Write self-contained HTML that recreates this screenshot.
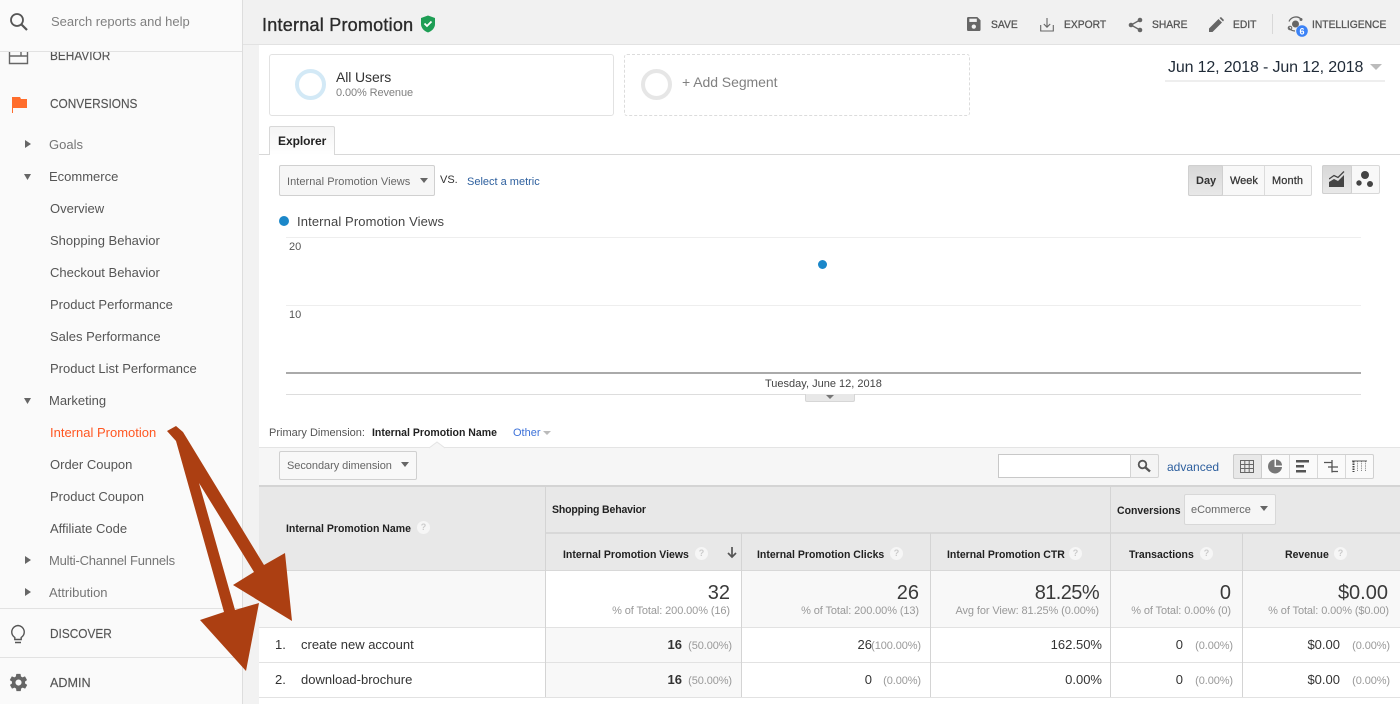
<!DOCTYPE html>
<html><head><meta charset="utf-8"><style>
html,body{margin:0;padding:0}
body{width:1400px;height:704px;overflow:hidden;position:relative;background:#fff;font-family:"Liberation Sans",sans-serif;color:#222}
.t{position:absolute;white-space:nowrap;line-height:16px}
.r{position:absolute;white-space:nowrap;line-height:16px;text-align:right}
.b{position:absolute;box-sizing:border-box}
.nav{font-size:13px;color:#555}
.up{transform:scaleX(.91);transform-origin:left center;-webkit-text-stroke:.15px #555}
.gr{color:#757575}
.h{font-size:11px;font-weight:bold;color:#222;transform:scaleX(.955);transform-origin:left center}
.tb{font-size:11px;color:#555;-webkit-text-stroke:.3px #555;transform:scaleX(.935);transform-origin:left center}
.q{position:absolute;width:13px;height:13px;border-radius:50%;background:#f6f6f6;color:#ccc;font-size:9px;line-height:13px;text-align:center;font-weight:bold}
.sub{font-size:11px;color:#999;letter-spacing:-.1px}
.big{font-size:20px;color:#3a3a3a;line-height:24px}
.cell{font-size:13px;color:#333}
svg{position:absolute}
</style></head><body>
<!-- sidebar -->
<div class="b" style="left:0;top:0;width:243px;height:704px;background:#fafafa;border-right:1px solid #ddd"></div>
<div class="b" style="left:243px;top:0;width:16px;height:704px;background:#f2f2f2"></div>
<div class="b" style="left:0;top:0;width:242px;height:52px;background:#fafafa;border-bottom:1px solid #e2e2e2;z-index:2"></div>
<svg style="left:8px;top:11px;z-index:3" width="22" height="22" viewBox="0 0 22 22"><circle cx="9" cy="9" r="6" fill="none" stroke="#555" stroke-width="1.800"/><path d="M13.500 13.500L19 19" stroke="#555" stroke-width="2.200"/></svg>
<div class="t" style="left:51px;top:14px;font-size:13px;color:#808080;z-index:3">Search reports and help</div>
<svg style="left:8px;top:50px" width="22" height="16"><path d="M1.500 2V13.500H19.500V2M1.500 6H19.500M13 2V6" fill="none" stroke="#666" stroke-width="1.400"/></svg>
<div class="t nav up" style="left:50px;top:48px">BEHAVIOR</div>
<svg style="left:10px;top:95px" width="18" height="19"><path d="M2 2H10L11 4H17V13H3V18H2Z" fill="#ff6d2c"/></svg>
<div class="t nav up" style="left:50px;top:96px">CONVERSIONS</div>
<svg style="left:24px;top:139px" width="10" height="10"><path d="M1 1L7 5L1 9Z" fill="#666"/></svg>
<div class="t nav gr" style="left:49px;top:137px">Goals</div>
<svg style="left:23px;top:172px" width="10" height="10"><path d="M1 2H8L4.500 8Z" fill="#666"/></svg>
<div class="t nav" style="left:49px;top:169px">Ecommerce</div>
<div class="t nav" style="left:50px;top:201px">Overview</div>
<div class="t nav" style="left:50px;top:233px">Shopping Behavior</div>
<div class="t nav" style="left:50px;top:265px">Checkout Behavior</div>
<div class="t nav" style="left:50px;top:297px">Product Performance</div>
<div class="t nav" style="left:50px;top:329px">Sales Performance</div>
<div class="t nav" style="left:50px;top:361px">Product List Performance</div>
<svg style="left:23px;top:396px" width="10" height="10"><path d="M1 2H8L4.500 8Z" fill="#666"/></svg>
<div class="t nav" style="left:49px;top:393px">Marketing</div>
<div class="t nav" style="left:50px;top:425px;color:#ff5722">Internal Promotion</div>
<div class="t nav" style="left:50px;top:457px">Order Coupon</div>
<div class="t nav" style="left:50px;top:489px">Product Coupon</div>
<div class="t nav" style="left:50px;top:521px">Affiliate Code</div>
<svg style="left:24px;top:555px" width="10" height="10"><path d="M1 1L7 5L1 9Z" fill="#666"/></svg>
<div class="t nav gr" style="left:49px;top:553px;letter-spacing:-.2px">Multi-Channel Funnels</div>
<svg style="left:24px;top:587px" width="10" height="10"><path d="M1 1L7 5L1 9Z" fill="#666"/></svg>
<div class="t nav gr" style="left:49px;top:585px">Attribution</div>
<div class="b" style="left:0;top:608px;width:242px;height:1px;background:#e2e2e2"></div>
<svg style="left:9px;top:623px" width="18" height="22"><path d="M9 2.500A6.500 6.500 0 0 0 5.800 14.500V16.500H12.200V14.500A6.500 6.500 0 0 0 9 2.500ZM6 19.500H12" fill="none" stroke="#555" stroke-width="1.400"/></svg>
<div class="t nav up" style="left:50px;top:626px">DISCOVER</div>
<div class="b" style="left:0;top:657px;width:242px;height:1px;background:#e2e2e2"></div>
<svg style="left:8px;top:672px" width="21" height="21" viewBox="0 0 24 24"><path fill="#666" d="M19.400 13c.04-.3.1-.7.1-1s-.03-.7-.1-1l2.100-1.600c.2-.15.25-.4.1-.6l-2-3.500c-.1-.2-.4-.3-.6-.2l-2.500 1c-.5-.4-1.100-.7-1.700-1l-.4-2.600c0-.2-.2-.4-.5-.4h-4c-.25 0-.45.2-.5.4l-.4 2.600c-.6.25-1.200.6-1.700 1l-2.500-1c-.2-.1-.5 0-.6.2l-2 3.500c-.1.2-.06.45.1.6L4.600 11c-.04.3-.1.7-.1 1s.03.7.1 1l-2.100 1.600c-.2.15-.25.4-.1.6l2 3.500c.1.2.4.3.6.2l2.500-1c.5.4 1.100.7 1.700 1l.4 2.600c.03.2.25.4.5.4h4c.25 0 .45-.2.5-.4l.4-2.600c.6-.25 1.200-.6 1.700-1l2.500 1c.2.1.5 0 .6-.2l2-3.500c.1-.2.06-.45-.1-.6zM12 15.500a3.500 3.500 0 1 1 0-7 3.500 3.500 0 0 1 0 7z"/></svg>
<div class="t nav" style="left:50px;top:675px;-webkit-text-stroke:.15px #555;transform:scaleX(.97);transform-origin:left center">ADMIN</div>

<!-- top bar -->
<div class="b" style="left:243px;top:0;width:1157px;height:45px;background:#f1f1f1;border-bottom:1px solid #e2e2e2"></div>
<div class="t" style="left:262px;top:15px;font-size:18px;line-height:20px;color:#2b2b2b;letter-spacing:.24px;-webkit-text-stroke:.35px #2b2b2b">Internal Promotion</div>
<svg style="left:420px;top:15px" width="16" height="18"><path d="M8 .5L15 3V9C15 13 12 16 8 17.500C4 16 1 13 1 9V3Z" fill="#1e9e55"/><path d="M4.500 8.500L7 11L11.500 6.500" fill="none" stroke="#fff" stroke-width="1.800"/></svg>
<svg style="left:967px;top:17px" width="14" height="14" viewBox="0 0 15 15"><path d="M1.500 0H11L14.500 3.500V13.500A1.500 1.500 0 0 1 13 15H1.500A1.500 1.500 0 0 1 0 13.500V1.500A1.500 1.500 0 0 1 1.500 0Z" fill="#666"/><rect x="2.500" y="1.800" width="8" height="3.500" fill="#f1f1f1"/><circle cx="7.300" cy="10.300" r="2.300" fill="#f1f1f1"/></svg>
<div class="t tb" style="left:991px;top:17px">SAVE</div>
<svg style="left:1040px;top:17px" width="14" height="15"><path d="M.7 8V14H13.300V8M7 1V10M3.800 7L7 10.200L10.200 7" fill="none" stroke="#666" stroke-width="1.100"/></svg>
<div class="t tb" style="left:1064px;top:17px">EXPORT</div>
<svg style="left:1128px;top:17px" width="15" height="16"><path d="M12 3L3 8L12 13" fill="none" stroke="#666" stroke-width="1.300"/><circle cx="12" cy="3" r="2.300" fill="#666"/><circle cx="3" cy="8" r="2.300" fill="#666"/><circle cx="12" cy="13" r="2.300" fill="#666"/></svg>
<div class="t tb" style="left:1152px;top:17px">SHARE</div>
<svg style="left:1209px;top:17px" width="15" height="15"><path d="M0 15V11.500L9.500 2L13 5.500L3.500 15ZM10.500 1L12 0L15 3L14 4.500Z" fill="#666"/></svg>
<div class="t tb" style="left:1233px;top:17px">EDIT</div>
<div class="b" style="left:1272px;top:14px;width:1px;height:20px;background:#d8d8d8"></div>
<svg style="left:1287px;top:16px" width="24" height="22"><circle cx="8.500" cy="8" r="3.500" fill="#666"/><path d="M2 5.500A7.500 7.500 0 0 1 14 3M1.500 11A7.500 7.500 0 0 0 8 15" fill="none" stroke="#666" stroke-width="1.300"/><circle cx="3" cy="12" r="1.800" fill="none" stroke="#666"/><circle cx="14" cy="3.500" r="1.500" fill="#666"/><circle cx="15" cy="15" r="5.800" fill="#3b82f6"/><text x="15" y="18.500" font-size="9" font-weight="bold" fill="#fff" text-anchor="middle" font-family="Liberation Sans">6</text></svg>
<div class="t tb" style="left:1312px;top:17px">INTELLIGENCE</div>

<!-- segments -->
<div class="b" style="left:269px;top:54px;width:345px;height:62px;border:1px solid #e2e2e2;border-radius:3px"></div>
<div class="b" style="left:295px;top:69px;width:31px;height:31px;border:4px solid #d3e9f6;border-radius:50%"></div>
<div class="t" style="left:336px;top:69px;font-size:14px;color:#333;letter-spacing:-.1px">All Users</div>
<div class="t" style="left:336px;top:85px;font-size:11px;color:#808080;letter-spacing:-.1px">0.00% Revenue</div>
<div class="b" style="left:624px;top:54px;width:346px;height:62px;border:1px dashed #dcdcdc;border-radius:3px"></div>
<div class="b" style="left:641px;top:69px;width:31px;height:31px;border:4px solid #e6e6e6;border-radius:50%"></div>
<div class="t" style="left:682px;top:74px;font-size:14px;color:#808080;letter-spacing:-.05px">+ Add Segment</div>
<div class="t" style="left:1168px;top:59px;font-size:16px;line-height:18px;color:#1f2a37;letter-spacing:-.15px">Jun 12, 2018 - Jun 12, 2018</div>
<svg style="left:1370px;top:64px" width="13" height="8"><path d="M0 0H12L6 6Z" fill="#bbb"/></svg>
<div class="b" style="left:1165px;top:80px;width:220px;height:2px;background:#eee"></div>

<!-- explorer -->
<div class="b" style="left:259px;top:154px;width:1141px;height:1px;background:#d8d8d8"></div>
<div class="b" style="left:269px;top:126px;width:66px;height:29px;border:1px solid #d8d8d8;border-bottom:0;background:linear-gradient(#f4f4f4,#fff);border-radius:2px 2px 0 0"></div>
<div class="t" style="left:278px;top:133px;font-size:12px;color:#222;font-weight:bold;letter-spacing:-.05px">Explorer</div>
<div class="b" style="left:279px;top:165px;width:156px;height:31px;border:1px solid #d0d0d0;border-radius:2px;background:#f6f6f6"></div>
<div class="t" style="left:287px;top:174px;font-size:11px;color:#666;letter-spacing:.05px">Internal Promotion Views</div>
<svg style="left:420px;top:178px" width="9" height="6"><path d="M0 0H8L4 5Z" fill="#666"/></svg>
<div class="t" style="left:440px;top:172px;font-size:11px;color:#333">VS.</div>
<div class="t" style="left:467px;top:174px;font-size:11px;color:#2d5f9e">Select a metric</div>

<div class="b" style="left:1188px;top:165px;width:124px;height:31px;border:1px solid #d8d8d8;border-radius:2px;background:#f8f8f8"></div>
<div class="b" style="left:1188px;top:165px;width:35px;height:31px;border:1px solid #d0d0d0;border-radius:2px;background:linear-gradient(#d8d8d8,#e8e8e8)"></div>
<div class="b" style="left:1264px;top:166px;width:1px;height:29px;background:#dcdcdc"></div>
<div class="t" style="left:1196px;top:173px;font-size:11px;color:#333;font-weight:bold">Day</div>
<div class="t" style="left:1230px;top:173px;font-size:11px;color:#333;-webkit-text-stroke:.25px #333">Week</div>
<div class="t" style="left:1272px;top:173px;font-size:11px;color:#333;letter-spacing:.1px;-webkit-text-stroke:.2px #333">Month</div>
<div class="b" style="left:1322px;top:165px;width:58px;height:29px;border:1px solid #d8d8d8;border-radius:2px;background:#f8f8f8"></div>
<div class="b" style="left:1322px;top:165px;width:30px;height:29px;border:1px solid #d0d0d0;border-radius:2px;background:linear-gradient(#d8d8d8,#e8e8e8)"></div>
<svg style="left:1329px;top:171px" width="16" height="17"><path d="M0 16V11L5 8L9 10L15 4V16Z" fill="#444"/><path d="M0 8L5 4.500L9 6.500L15 .5" fill="none" stroke="#444" stroke-width="1.300"/></svg>
<svg style="left:1356px;top:170px" width="18" height="18"><circle cx="9" cy="5" r="4" fill="#444"/><circle cx="3" cy="13" r="2.700" fill="#444"/><circle cx="14" cy="14" r="3" fill="#444"/></svg>

<!-- chart -->
<div class="b" style="left:279px;top:216px;width:10px;height:10px;border-radius:50%;background:#1b87c9"></div>
<div class="t" style="left:297px;top:214px;font-size:13px;color:#444;letter-spacing:.12px">Internal Promotion Views</div>
<div class="b" style="left:286px;top:237px;width:1075px;height:1px;background:#eee"></div>
<div class="t" style="left:289px;top:239px;font-size:11px;color:#555">20</div>
<div class="b" style="left:286px;top:305px;width:1075px;height:1px;background:#eee"></div>
<div class="t" style="left:289px;top:307px;font-size:11px;color:#555">10</div>
<div class="b" style="left:818px;top:260px;width:9px;height:9px;border-radius:50%;background:#1b87c9"></div>
<div class="b" style="left:286px;top:372px;width:1075px;height:2px;background:#aaa"></div>
<div class="t" style="left:765px;top:376px;font-size:11px;color:#444">Tuesday, June 12, 2018</div>
<div class="b" style="left:286px;top:394px;width:1075px;height:1px;background:#ddd"></div>
<div class="b" style="left:805px;top:394px;width:50px;height:8px;background:#e8e8e8;border:1px solid #d6d6d6;border-top:0;border-radius:0 0 2px 2px"></div>
<svg style="left:825px;top:395px" width="10" height="5"><path d="M1 0H9L5 4Z" fill="#777"/></svg>

<!-- primary dimension -->
<div class="t" style="left:269px;top:425px;font-size:11px;color:#555">Primary Dimension:</div>
<div class="t h" style="left:372px;top:425px">Internal Promotion Name</div>
<div class="t" style="left:513px;top:425px;font-size:11px;color:#3d72d9">Other</div>
<svg style="left:543px;top:431px" width="9" height="5"><path d="M0 0H8L4 4Z" fill="#bbb"/></svg>
<div class="b" style="left:259px;top:447px;width:1141px;height:38px;background:#f6f6f6;border-top:1px solid #e4e4e4"></div>
<svg style="left:428px;top:441px" width="18" height="8"><path d="M1 7L9 1L17 7" fill="#f6f6f6" stroke="#e4e4e4"/></svg>
<div class="b" style="left:279px;top:451px;width:138px;height:29px;border:1px solid #d0d0d0;border-radius:2px;background:#f8f8f8"></div>
<div class="t" style="left:287px;top:458px;font-size:11px;color:#666;letter-spacing:-.05px">Secondary dimension</div>
<svg style="left:401px;top:462px" width="9" height="6"><path d="M0 0H8L4 5Z" fill="#666"/></svg>
<div class="b" style="left:998px;top:454px;width:133px;height:24px;border:1px solid #c8c8c8;background:#fff"></div>
<div class="b" style="left:1130px;top:454px;width:29px;height:24px;border:1px solid #d4d4d4;background:#f4f4f4;border-radius:0 2px 2px 0"></div>
<svg style="left:1137px;top:459px" width="15" height="14"><circle cx="5.500" cy="5.500" r="3.800" fill="none" stroke="#555" stroke-width="1.800"/><path d="M8.500 8.500L13 12.500" stroke="#555" stroke-width="2.400"/></svg>
<div class="t" style="left:1167px;top:459px;font-size:12px;color:#2d5f9e">advanced</div>
<div class="b" style="left:1233px;top:454px;width:141px;height:25px;border:1px solid #d0d0d0;border-radius:2px;background:#fafafa"></div>
<div class="b" style="left:1233px;top:454px;width:29px;height:25px;border:1px solid #ccc;background:#e8e8e8;border-radius:2px"></div>
<div class="b" style="left:1289px;top:455px;width:1px;height:23px;background:#d8d8d8"></div>
<div class="b" style="left:1317px;top:455px;width:1px;height:23px;background:#d8d8d8"></div>
<div class="b" style="left:1345px;top:455px;width:1px;height:23px;background:#d8d8d8"></div>
<svg style="left:1240px;top:460px" width="15" height="14"><path d="M.5 .5H13.500V12.500H.5ZM.5 4.500H13.500M.5 8.500H13.500M4.800 .5V12.500M9.200 .5V12.500" fill="none" stroke="#666"/></svg>
<svg style="left:1268px;top:459px" width="15" height="15"><path d="M6.500 .5A7 7 0 1 0 14 8H6.500Z" fill="#777"/><path d="M8 .5A6 6 0 0 1 14 6.500H8Z" fill="#777"/></svg>
<svg style="left:1296px;top:460px" width="15" height="13"><path d="M0 0H13V2.500H0ZM0 5H8V7.500H0ZM0 10H10V12.500H0Z" fill="#555"/></svg>
<svg style="left:1324px;top:459px" width="15" height="15"><path d="M0 3.500H8M8 1V13.500M4 8H14M8 12.500H14" fill="none" stroke="#555" stroke-width="1.300"/></svg>
<svg style="left:1352px;top:460px" width="16" height="13"><path d="M5.500 1V12M9.500 1V12M13.500 1V12" fill="none" stroke="#888" stroke-dasharray="1.200 1"/><path d="M0 1H15" stroke="#555"/><path d="M1.500 1V12" stroke="#444" stroke-width="2" stroke-dasharray="1.500 1"/></svg>

<!-- table -->
<div class="b" style="left:259px;top:485px;width:1141px;height:85px;background:#e8e8e8;border-top:2px solid #d4d4d4"></div>
<div class="b" style="left:259px;top:570px;width:1141px;height:57px;background:#f8f8f8;border-top:1px solid #d8d8d8"></div>
<div class="b" style="left:545px;top:570px;width:196px;height:57px;background:#fff;border-top:1px solid #d8d8d8"></div>
<div class="b" style="left:545px;top:627px;width:196px;height:70px;background:#f8f8f8"></div>
<div class="b" style="left:259px;top:627px;width:1141px;height:1px;background:#e2e2e2"></div>
<div class="b" style="left:259px;top:662px;width:1141px;height:1px;background:#e2e2e2"></div>
<div class="b" style="left:259px;top:697px;width:1141px;height:1px;background:#e2e2e2"></div>
<div class="b" style="left:545px;top:532px;width:855px;height:2px;background:#d8d8d8"></div>
<div class="b" style="left:545px;top:485px;width:1px;height:212px;background:#d4d4d4"></div>
<div class="b" style="left:741px;top:533px;width:1px;height:164px;background:#d4d4d4"></div>
<div class="b" style="left:930px;top:533px;width:1px;height:164px;background:#d4d4d4"></div>
<div class="b" style="left:1110px;top:485px;width:1px;height:212px;background:#d4d4d4"></div>
<div class="b" style="left:1242px;top:533px;width:1px;height:164px;background:#d4d4d4"></div>

<div class="t h" style="left:286px;top:521px">Internal Promotion Name</div>
<div class="q" style="left:417px;top:521px">?</div>
<div class="t h" style="left:552px;top:502px;letter-spacing:-.15px">Shopping Behavior</div>
<div class="t h" style="left:563px;top:547px">Internal Promotion Views</div>
<div class="q" style="left:695px;top:547px">?</div>
<svg style="left:726px;top:546px" width="12" height="13"><path d="M6 1V11M2 7L6 11L10 7" fill="none" stroke="#555" stroke-width="1.700"/></svg>
<div class="t h" style="left:757px;top:547px">Internal Promotion Clicks</div>
<div class="q" style="left:890px;top:547px">?</div>
<div class="t h" style="left:947px;top:547px">Internal Promotion CTR</div>
<div class="q" style="left:1069px;top:547px">?</div>
<div class="t h" style="left:1117px;top:503px">Conversions</div>
<div class="b" style="left:1184px;top:494px;width:92px;height:31px;border:1px solid #d8d8d8;border-radius:2px;background:#f6f6f6"></div>
<div class="t" style="left:1191px;top:502px;font-size:11px;color:#666">eCommerce</div>
<svg style="left:1260px;top:506px" width="9" height="6"><path d="M0 0H8L4 5Z" fill="#666"/></svg>
<div class="t h" style="left:1129px;top:547px">Transactions</div>
<div class="q" style="left:1200px;top:547px">?</div>
<div class="t h" style="left:1285px;top:547px">Revenue</div>
<div class="q" style="left:1334px;top:547px">?</div>

<div class="r big" style="right:670px;top:581px">32</div>
<div class="r sub" style="right:670px;top:603px">% of Total: 200.00% (16)</div>
<div class="r big" style="right:481px;top:581px">26</div>
<div class="r sub" style="right:481px;top:603px">% of Total: 200.00% (13)</div>
<div class="r big" style="right:301px;top:581px;letter-spacing:-.6px">81.25%</div>
<div class="r sub" style="right:301px;top:603px">Avg for View: 81.25% (0.00%)</div>
<div class="r big" style="right:169px;top:581px">0</div>
<div class="r sub" style="right:169px;top:603px">% of Total: 0.00% (0)</div>
<div class="r big" style="right:12px;top:581px">$0.00</div>
<div class="r sub" style="right:11px;top:603px">% of Total: 0.00% ($0.00)</div>

<div class="t cell" style="left:275px;top:637px">1.</div>
<div class="t cell" style="left:301px;top:637px">create new account</div>
<div class="r cell" style="right:718px;top:637px;font-weight:bold">16</div>
<div class="r sub" style="right:668px;top:638px">(50.00%)</div>
<div class="r cell" style="right:528px;top:637px">26</div>
<div class="r sub" style="right:479px;top:638px">(100.00%)</div>
<div class="r cell" style="right:298px;top:637px">162.50%</div>
<div class="r cell" style="right:217px;top:637px">0</div>
<div class="r sub" style="right:167px;top:638px">(0.00%)</div>
<div class="r cell" style="right:60px;top:637px">$0.00</div>
<div class="r sub" style="right:10px;top:638px">(0.00%)</div>

<div class="t cell" style="left:275px;top:672px">2.</div>
<div class="t cell" style="left:301px;top:672px">download-brochure</div>
<div class="r cell" style="right:718px;top:672px;font-weight:bold">16</div>
<div class="r sub" style="right:668px;top:673px">(50.00%)</div>
<div class="r cell" style="right:528px;top:672px">0</div>
<div class="r sub" style="right:479px;top:673px">(0.00%)</div>
<div class="r cell" style="right:298px;top:672px">0.00%</div>
<div class="r cell" style="right:217px;top:672px">0</div>
<div class="r sub" style="right:167px;top:673px">(0.00%)</div>
<div class="r cell" style="right:60px;top:672px">$0.00</div>
<div class="r sub" style="right:10px;top:673px">(0.00%)</div>

<!-- annotation arrows -->
<svg style="left:0;top:0;z-index:5" width="1400" height="704"><path fill="#ac3f12" d="M167 431L176 426L183 432L264 565L285 553L292 621L233 585L254 572L199 483L235 610L259 603L246 671L200 620L224 612L176 441Z"/></svg>
</body></html>
